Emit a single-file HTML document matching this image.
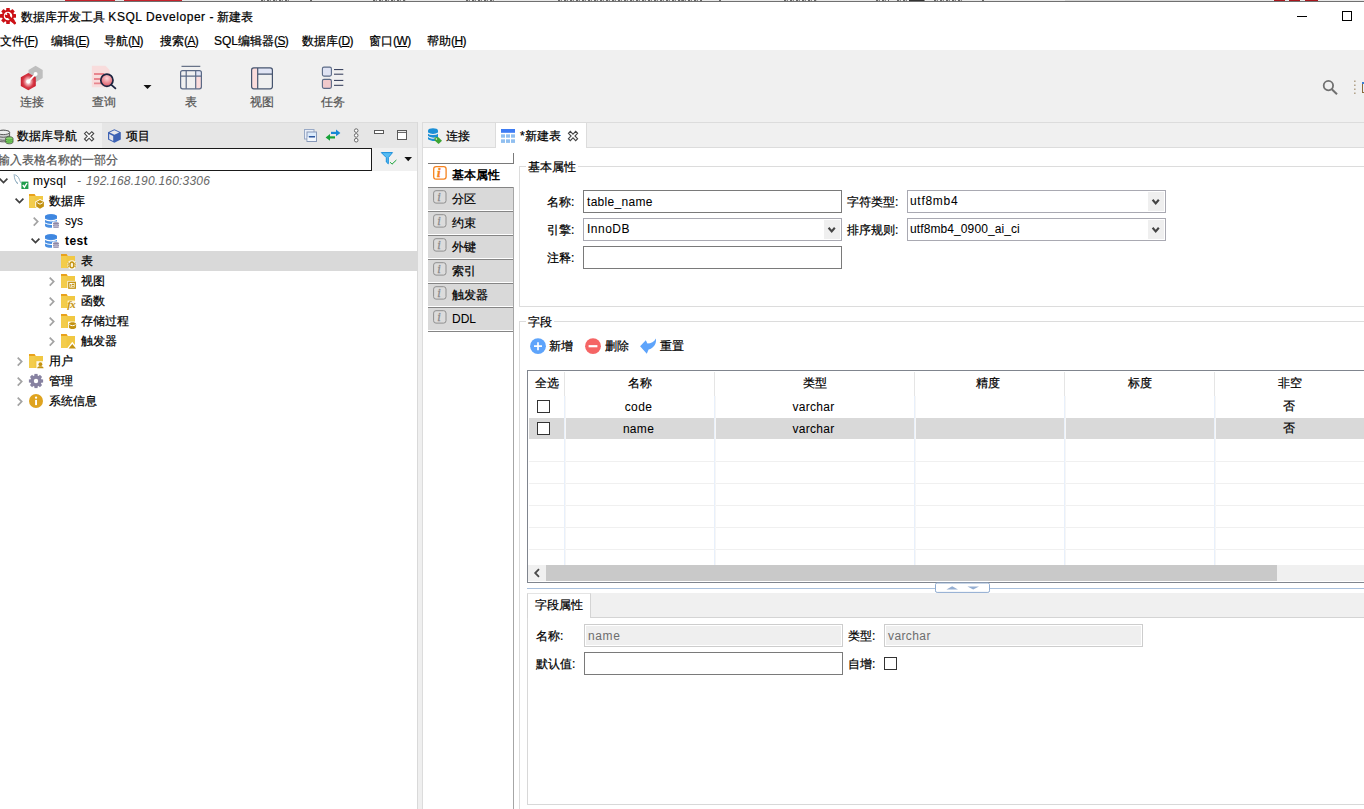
<!DOCTYPE html>
<html lang="zh">
<head>
<meta charset="utf-8">
<title>KSQL Developer</title>
<style>
*{box-sizing:border-box;margin:0;padding:0}
html,body{width:1364px;height:809px;overflow:hidden;background:#fff}
body{font-family:"Liberation Sans",sans-serif;font-size:12px;color:#000;-webkit-text-stroke:0.22px currentColor}
#app{position:relative;width:1364px;height:809px;overflow:hidden;background:#fff}
.a{position:absolute}
.t{position:absolute;white-space:nowrap;line-height:16px;height:16px;font-size:12px}
.g{color:#444}
svg{position:absolute;overflow:visible}
/* top strip */
#strip{left:0;top:0;width:1364px;height:2px;background:#e8e8e8}
#strip i{position:absolute;top:0;height:1px;background:#777}
/* title / menu */
#menu u{text-decoration:underline}
.p{letter-spacing:-0.6px}
/* toolbar */
#toolbar{left:0;top:50px;width:1364px;height:72px;background:#f0f0f0}
.tl{color:#555}
/* left panel */
#lp{left:0;top:122px;width:418px;height:687px;background:#fff;border-right:1px solid #d9d9d9}
#lphead{left:0;top:0;width:417px;height:26px;background:#e6e6e6;border-top:1px solid #dcdcdc}
#lptab{left:0;top:1px;width:102px;height:25px;background:#f0f0f0}
#lpfilter{left:0;top:26px;width:417px;height:23px;background:#f0f0f0}
#lpinput{left:-2px;top:26px;width:374px;height:23px;background:#fff;border:1px solid #1a1a1a}
.row{position:absolute;left:0;width:417px;height:20px}
.row.sel{background:#d9d9d9}
/* right panel */
#sash{left:418px;top:122px;width:4px;height:687px;background:#efefef}
#rp{left:422px;top:122px;width:942px;height:687px;background:#fff;border-left:1px solid #dcdcdc}
#rphead{left:0;top:0;width:941px;height:26px;background:#f0f0f0;border-top:1px solid #dcdcdc;border-bottom:1px solid #dcdcdc}
#rptab{left:72px;top:1px;width:92px;height:25px;background:#fff;border-left:1px solid #dcdcdc;border-right:1px solid #dcdcdc}
.side{position:absolute;left:5px;width:86px;height:22px;background:#d9d9d9;border-top:1px solid #8a8a8a;border-right:1px solid #c8c8c8}
.side.on{background:#fff;border:none}
.inp{position:absolute;height:23px;background:#fff;border:1px solid #7a7a7a}
.cmb{position:absolute;height:23px;background:#fff;border:1px solid #a9a9b2}
.cmb b{position:absolute;right:1px;top:1px;width:16px;height:19px;background:#efefef}
.dis{position:absolute;height:23px;background:#efefef;border:1px solid #cdcdcd;box-shadow:inset 0 0 0 1px #fff}
.vl{position:absolute;width:1px;background:#e6ebf6}
.hl{position:absolute;height:1px;background:#f0f0f0}
.cb{position:absolute;width:13px;height:13px;border:1px solid #333;background:#fff}

.sd{position:absolute;left:428px;width:86px;height:24px;border-top:1px solid #858585;background:#fff}
.sd b{position:absolute;left:0;top:0;width:85px;height:22px;background:#d9d9d9}
.sd .t{left:24px;top:3px}
.lb{position:absolute;white-space:nowrap;line-height:16px;height:16px;font-size:12px}
.gl{position:absolute;background:#dcdcdc}
.th{position:absolute;top:375px;line-height:16px;height:16px;text-align:center;white-space:nowrap}
.td{position:absolute;line-height:16px;height:16px;text-align:center;white-space:nowrap}
.l{-webkit-text-stroke:0.05px currentColor}
</style>
</head>
<body>
<div id="app">

<svg width="0" height="0" style="position:absolute">
 <defs>
  <radialGradient id="gr" cx="50%" cy="50%" r="50%"><stop offset="0" stop-color="#fff"/><stop offset="0.25" stop-color="#f6c9cd"/><stop offset="0.7" stop-color="#d63a47"/><stop offset="1" stop-color="#cb1f2e"/></radialGradient>
  <radialGradient id="gm" cx="50%" cy="35%" r="60%"><stop offset="0" stop-color="#fbd5d8"/><stop offset="1" stop-color="#e0606c"/></radialGradient>
  <symbol id="cd" viewBox="0 0 16 20"><path d="M3.6,7.7 L7.5,11.6 L11.4,7.7" fill="none" stroke="#404040" stroke-width="1.7"/></symbol>
  <symbol id="cr" viewBox="0 0 16 20"><path d="M5.7,6.6 L9.7,10.6 L5.7,14.6" fill="none" stroke="#a3a3a3" stroke-width="1.7"/></symbol>
  <symbol id="fo" viewBox="0 0 16 16"><path d="M0,0 H5.6 L6.8,2 H0 Z" fill="#e9a21c"/><path d="M0,2 H14 V14 H0 Z" fill="#f1c843"/><path d="M0,2 H5.5 V14 H0 Z" fill="#f3cc4c"/></symbol>
  <symbol id="db" viewBox="0 0 16 16">
    <path d="M0,2.6 C0,-0.6 12,-0.6 12,2.6 V11.4 C12,14.6 0,14.6 0,11.4 Z" fill="#4a8fe2"/>
    <ellipse cx="6" cy="2.6" rx="6" ry="2.4" fill="#3f87e0"/>
    <path d="M0,5.2 C2,7.4 10,7.4 12,5.2" fill="none" stroke="#fff" stroke-width="1.1"/>
    <path d="M0,8.8 C2,11 10,11 12,8.8" fill="none" stroke="#fff" stroke-width="1.1"/>
    <rect x="7" y="7.4" width="8" height="8" rx="1.5" fill="#fff"/>
    <path d="M8,9.3 C8,7.9 14,7.9 14,9.3 V12.9 C14,14.3 8,14.3 8,12.9 Z" fill="#8d87a6"/>
    <path d="M8,10.4 C9.5,11.3 12.5,11.3 14,10.4 M8,12.2 C9.5,13.1 12.5,13.1 14,12.2" fill="none" stroke="#e8e6f0" stroke-width="0.7"/>
  </symbol>
 </defs>
</svg>

<!-- sliver of another window peeking at the very top -->
<div id="strip" class="a">
  <i style="left:65px;width:50px;background:#c8222c"></i><i style="left:124px;width:58px;background:#c8222c"></i>
  <i style="left:261px;width:29px;background:repeating-linear-gradient(90deg,#666 0 2px,#ccc 2px 3px,#888 3px 4px,#eee 4px 6px)"></i>
  <i style="left:310px;width:2px;background:repeating-linear-gradient(90deg,#666 0 2px,#ccc 2px 3px,#888 3px 4px,#eee 4px 6px)"></i>
  <i style="left:373px;width:33px;background:repeating-linear-gradient(90deg,#666 0 2px,#ccc 2px 3px,#888 3px 4px,#eee 4px 6px)"></i>
  <i style="left:466px;width:30px;background:repeating-linear-gradient(90deg,#666 0 2px,#ccc 2px 3px,#888 3px 4px,#eee 4px 6px)"></i>
  <i style="left:558px;width:124px;background:repeating-linear-gradient(90deg,#666 0 2px,#ccc 2px 3px,#888 3px 4px,#eee 4px 6px)"></i>
  <i style="left:682px;width:20px;background:repeating-linear-gradient(90deg,#666 0 2px,#ccc 2px 3px,#888 3px 4px,#eee 4px 6px)"></i>
  <i style="left:719px;width:2px;background:repeating-linear-gradient(90deg,#666 0 2px,#ccc 2px 3px,#888 3px 4px,#eee 4px 6px)"></i>
  <i style="left:784px;width:33px;background:repeating-linear-gradient(90deg,#666 0 2px,#ccc 2px 3px,#888 3px 4px,#eee 4px 6px)"></i>
  <i style="left:876px;width:13px;background:repeating-linear-gradient(90deg,#666 0 2px,#ccc 2px 3px,#888 3px 4px,#eee 4px 6px)"></i>
  <i style="left:897px;width:29px;background:repeating-linear-gradient(90deg,#666 0 2px,#ccc 2px 3px,#888 3px 4px,#eee 4px 6px)"></i>
  <i style="left:934px;width:28px;background:repeating-linear-gradient(90deg,#666 0 2px,#ccc 2px 3px,#888 3px 4px,#eee 4px 6px)"></i>
  <i style="left:982px;width:2px;background:repeating-linear-gradient(90deg,#666 0 2px,#ccc 2px 3px,#888 3px 4px,#eee 4px 6px)"></i>
  <i style="left:909px;width:15px;background:#333"></i>
  <i style="left:1065px;width:75px;background:#d4d4d4"></i><i style="left:1150px;width:70px;background:#d8d8d8"></i>
  <i style="left:1274px;width:11px;background:#a8151c"></i><i style="left:1289px;width:11px;background:#a8151c"></i><i style="left:1305px;width:13px;background:#a8151c"></i>
  <i style="left:0;width:1364px;top:1px;background:#707070"></i>
</div>

<!-- TITLE BAR -->
<div id="title" class="a" style="left:0;top:2px;width:1364px;height:29px;background:#fff">
  <svg style="left:0;top:6px" width="17" height="18" viewBox="0 0 17 18"><g fill="#cc1016"><rect x="6.2" y="-0.1" width="3.6" height="4" rx="0.5" transform="rotate(0 8 7.9)"/><rect x="6.2" y="-0.1" width="3.6" height="4" rx="0.5" transform="rotate(45 8 7.9)"/><rect x="6.2" y="-0.1" width="3.6" height="4" rx="0.5" transform="rotate(90 8 7.9)"/><rect x="6.2" y="-0.1" width="3.6" height="4" rx="0.5" transform="rotate(135 8 7.9)"/><rect x="6.2" y="-0.1" width="3.6" height="4" rx="0.5" transform="rotate(180 8 7.9)"/><rect x="6.2" y="-0.1" width="3.6" height="4" rx="0.5" transform="rotate(225 8 7.9)"/><rect x="6.2" y="-0.1" width="3.6" height="4" rx="0.5" transform="rotate(270 8 7.9)"/><rect x="6.2" y="-0.1" width="3.6" height="4" rx="0.5" transform="rotate(315 8 7.9)"/><circle cx="8" cy="7.9" r="6.1"/></g><circle cx="8" cy="7.9" r="4.25" fill="#fff"/><circle cx="7.4" cy="7.4" r="2.55" fill="#cc1016"/><path d="M7.5,7.3 L4.2,6.3 L6.3,3.8 Z" fill="#fff"/><path d="M8.2,8.2 L14.7,15" stroke="#cc1016" stroke-width="2.7" stroke-linecap="round"/></svg>
  <div class="t" style="left:21px;top:7px">数据库开发工具 <span style="letter-spacing:0.55px">KSQL Developer -</span> 新建表</div>
  <div class="a" style="left:1297px;top:14px;width:10px;height:1px;background:#000"></div>
  <div class="a" style="left:1342px;top:9px;width:10px;height:10px;border:1px solid #000"></div>
</div>

<!-- MENU BAR -->
<div id="menu" class="a" style="left:0;top:31px;width:1364px;height:19px;background:#fff">
  <div class="t" style="left:0;top:2px">文件<span class="p">(<u>F</u>)</span></div>
  <div class="t" style="left:51px;top:2px">编辑<span class="p">(<u>E</u>)</span></div>
  <div class="t" style="left:104px;top:2px">导航<span class="p">(<u>N</u>)</span></div>
  <div class="t" style="left:160px;top:2px">搜索<span class="p">(<u>A</u>)</span></div>
  <div class="t" style="left:214px;top:2px">SQL编辑器<span class="p">(<u>S</u>)</span></div>
  <div class="t" style="left:302px;top:2px">数据库<span class="p">(<u>D</u>)</span></div>
  <div class="t" style="left:369px;top:2px">窗口<span class="p">(<u>W</u>)</span></div>
  <div class="t" style="left:427px;top:2px">帮助<span class="p">(<u>H</u>)</span></div>
</div>

<!-- TOOLBAR -->
<div id="toolbar" class="a">

  <svg style="left:0;top:0" width="1364" height="72" viewBox="0 50 1364 72">
   <!-- connect -->
   <polygon points="35.6,65.8 42.7,69.9 42.7,78.1 35.6,82.2 28.5,78.1 28.5,69.9" fill="#bebebe"/>
   <polygon points="28.3,73 35.8,77.3 35.8,85.9 28.3,90.2 20.8,85.9 20.8,77.3" fill="url(#gr)"/>
   <path d="M28.3,81.6 L35.6,74" stroke="#fff" stroke-width="1.8" stroke-linecap="round"/>
   <circle cx="28.3" cy="81.6" r="2" fill="#fff"/><circle cx="35.6" cy="74" r="2" fill="#fff"/>
   <!-- query -->
   <path d="M91.8,65.8 H105.5 L109.6,70 V87.2 H91.8 Z" fill="#f8dcdc"/>
   <path d="M94,74 H104 M94,79 H101 M94,83.4 H101" stroke="#e8858d" stroke-width="1.8"/>
   <circle cx="106.9" cy="80.2" r="6.1" fill="url(#gm)" stroke="#1b2440" stroke-width="1.7"/>
   <path d="M111.4,84.8 L115.4,88.4" stroke="#1b2440" stroke-width="1.8" stroke-linecap="round"/>
   <path d="M143.5,85 H151.5 L147.5,89 Z" fill="#111"/>
   <!-- table -->
   <path d="M181.5,66.3 H200.3" stroke="#46546f" stroke-width="1"/>
   <rect x="195.7" y="70.7" width="5.6" height="5.5" fill="#e1e5f5"/>
   <rect x="195.7" y="76.2" width="5.6" height="12.4" fill="#fbdcdc"/>
   <rect x="180.6" y="70.6" width="20.8" height="18.2" rx="2" fill="none" stroke="#5b6a86" stroke-width="1.2"/>
   <path d="M186.2,70.6 V88.8 M195.7,70.6 V88.8 M180.6,76.2 H201.4" stroke="#5b6a86" stroke-width="1.2"/>
   <!-- view -->
   <rect x="251.6" y="68" width="6" height="20.6" fill="#fbdcdc"/>
   <rect x="257.7" y="68" width="14.4" height="6.2" fill="#e1e5f5"/>
   <rect x="251.6" y="67.9" width="20.8" height="20.9" rx="2.2" fill="none" stroke="#46546f" stroke-width="1.2"/>
   <path d="M257.7,67.9 V88.8 M257.7,74.2 H272.4" stroke="#46546f" stroke-width="1.2"/>
   <!-- task -->
   <rect x="322.4" y="67.1" width="9" height="9" rx="1.6" fill="#dfe3f3" stroke="#5b6a86" stroke-width="1.1"/>
   <rect x="322.4" y="79.4" width="9" height="9" rx="1.6" fill="#f0c9cb" stroke="#5b6a86" stroke-width="1.1"/>
   <path d="M334,69.6 H343.3 M334,74.2 H343.3 M334,80.4 H343.3 M334,85.3 H343.3" stroke="#2a3453" stroke-width="1"/>
   <!-- search -->
   <circle cx="1328.4" cy="85.6" r="4.7" fill="none" stroke="#707070" stroke-width="1.8"/>
   <path d="M1331.8,89.2 L1337,94.2" stroke="#707070" stroke-width="2"/>
   <path d="M1354.8,80.5 V94" stroke="#b3a48c" stroke-width="1.6" stroke-dasharray="1.6 2.4"/>
   <rect x="1362.5" y="82.5" width="4" height="10" fill="#e8f0fa" stroke="#8a6a3a" stroke-width="1"/>
   <rect x="1362" y="82" width="4" height="2" fill="#3b7fd4"/>
  </svg>
  <div class="t tl" style="left:20px;top:44px">连接</div>
  <div class="t tl" style="left:92px;top:44px">查询</div>
  <div class="t tl" style="left:185px;top:44px">表</div>
  <div class="t tl" style="left:250px;top:44px">视图</div>
  <div class="t tl" style="left:321px;top:44px">任务</div>
</div>

<!-- LEFT PANEL -->
<div id="lp" class="a">
  <div id="lphead" class="a"></div>
  <div id="lptab" class="a"></div>
  <div class="t" style="left:17px;top:6px">数据库导航</div>
  <div class="t" style="left:126px;top:6px">项目</div>
  <div id="lpfilter" class="a"></div>
  <div id="lpinput" class="a"></div>
  <div class="t g" style="left:-2px;top:30px;color:#555">输入表格名称的一部分</div>

  <svg style="left:0;top:0" width="417" height="50" viewBox="0 122 417 50">
   <!-- db navigator icon -->
   <path d="M-3,132.4 C-3,129.6 9.6,129.6 9.6,132.4 V139.6 C9.6,142.6 -3,142.6 -3,139.6 Z" fill="#cfcfcf" stroke="#5e5e5e" stroke-width="1"/>
   <ellipse cx="3.3" cy="132.4" rx="6.3" ry="2.2" fill="#ececec" stroke="#5e5e5e" stroke-width="1"/>
   <path d="M-3,135.8 C0,137.8 6.6,137.8 9.6,135.8 M-3,138.6 C-1,140 2,140.4 5,140.2" fill="none" stroke="#5e5e5e" stroke-width="1"/>
   <path d="M5.6,138.4 C5.6,136.2 13,136.2 13,138.4 V142 C13,144.4 5.6,144.4 5.6,142 Z" fill="#86d46a" stroke="#4e5a4a" stroke-width="0.9"/>
   <path d="M5.8,139.2 C7.4,140.4 11.2,140.4 12.8,139.2 M5.8,141.2 C7.4,142.4 11.2,142.4 12.8,141.2" fill="none" stroke="#3f9a32" stroke-width="0.9"/>
   <!-- close x -->
   <path d="M84.5,133.6 L86.4,131.7 L89.1,134.4 L91.8,131.7 L93.7,133.6 L91.0,136.3 L93.7,139.0 L91.8,140.9 L89.1,138.2 L86.4,140.9 L84.5,139.0 L87.2,136.3 Z" fill="#fff" stroke="#444" stroke-width="1.1" stroke-linejoin="miter"/>
   <!-- project cube -->
   <path d="M114.4,129.2 L120.8,132.2 V139.6 L114.4,142.8 L108,139.6 V132.2 Z" fill="#3d62b4"/>
   <path d="M114.4,130.2 L119.2,132.5 L114.4,134.8 L109.6,132.5 Z" fill="#e9e9ec"/>
   <path d="M109.2,134 L113.2,136 V141 L109.2,139 Z" fill="#e6e6ea"/>
   <!-- collapse all -->
   <rect x="304.5" y="129.5" width="9.5" height="9.5" fill="#e9eef7" stroke="#98a9c6" stroke-width="1"/>
   <rect x="307" y="132" width="9.5" height="9.5" fill="#dcebfb" stroke="#8798b8" stroke-width="1"/><rect x="307.6" y="137" width="8.3" height="4" fill="#f4f8fd"/>
   <path d="M308.8,136.8 H315" stroke="#0d3d8e" stroke-width="1.3"/>
   <!-- link arrows -->
   <path d="M331,132.9 H337.4" stroke="#1588d6" stroke-width="2.2"/><path d="M336,129.6 L340.4,132.9 L336,136.2 Z" fill="#1588d6"/>
   <path d="M328.6,137.4 H335" stroke="#16a238" stroke-width="2.2"/><path d="M330,134.1 L325.6,137.4 L330,140.7 Z" fill="#16a238"/>
   <!-- view menu dots -->
   <circle cx="356.2" cy="130.6" r="1.8" fill="#fff" stroke="#5a5a5a" stroke-width="0.9"/>
   <circle cx="356.2" cy="135.4" r="1.8" fill="#fff" stroke="#5a5a5a" stroke-width="0.9"/>
   <circle cx="356.2" cy="140.2" r="1.8" fill="#fff" stroke="#5a5a5a" stroke-width="0.9"/>
   <!-- min / max -->
   <rect x="374.5" y="130.5" width="9" height="3" fill="#fff" stroke="#5a5a5a" stroke-width="1"/>
   <rect x="397.5" y="130.5" width="9" height="9" fill="#fff" stroke="#5a5a5a" stroke-width="1"/>
   <path d="M397.5,132.4 H406.5" stroke="#5a5a5a" stroke-width="1"/>
   <!-- filter -->
   <path d="M381.3,152.6 H392.5 L388.3,157.6 V163.8 L386.3,162 V157.6 Z" fill="#56bcf2" stroke="#1a8fdc" stroke-width="1" stroke-linejoin="round"/>
   <path d="M390.2,162.2 L392,164.2 L396.4,160" fill="none" stroke="#17a338" stroke-width="1"/>
   <path d="M404.4,157 H412 L408.2,161.2 Z" fill="#111"/>
  </svg>
  <!-- tree -->
  <div class="row" style="top:49px"><svg style="left:-4px;top:0" width="16" height="20"><use href="#cd"/></svg><svg style="left:13px;top:3px" width="16" height="16" viewBox="0 0 16 16"><path d="M0.6,0.8 C3,0.6 5.4,2.4 6.4,5.4 C7,7.2 7.2,8.4 8.4,9.4 M1.2,1.4 C1.4,4.4 2.2,7.2 4.6,9.8 L3.6,7.6" fill="none" stroke="#8fadc0" stroke-width="1"/><rect x="8.4" y="7.6" width="7" height="7.4" fill="#1f9d4c"/><path d="M9.8,11 L11.4,13.2 L14,9" fill="none" stroke="#fff" stroke-width="1.4"/></svg><div class="t l" style="left:33px;top:2px;letter-spacing:0.4px">mysql</div><div class="t" style="left:77px;top:2px;font-style:italic;color:#686868;letter-spacing:0.2px;word-spacing:1.2px;-webkit-text-stroke:0">- 192.168.190.160:3306</div></div>
  <div class="row" style="top:69px"><svg style="left:12px;top:0" width="16" height="20"><use href="#cd"/></svg><svg style="left:29px;top:3px" width="16" height="16" viewBox="0 0 16 16"><use href="#fo" width="16" height="16"/><path d="M11,4.9 L15.8,7.6 V13 L11,15.7 L6.3,13 V7.6 Z" fill="#fff"/><path d="M11,5.9 L14.9,8.1 V12.5 L11,14.7 L7.2,12.5 V8.1 Z" fill="#c39211"/><path d="M8.3,8.7 L11,10.2 L13.8,8.7" fill="none" stroke="#fff" stroke-width="1"/></svg><div class="t" style="left:49px;top:2px;">数据库</div></div>
  <div class="row" style="top:89px"><svg style="left:28px;top:0" width="16" height="20"><use href="#cr"/></svg><svg style="left:45px;top:3px" width="16" height="16"><use href="#db"/></svg><div class="t l" style="left:65px;top:2px;">sys</div></div>
  <div class="row" style="top:109px"><svg style="left:28px;top:0" width="16" height="20"><use href="#cd"/></svg><svg style="left:45px;top:3px" width="16" height="16"><use href="#db"/></svg><div class="t" style="left:65px;top:2px;font-weight:bold;-webkit-text-stroke:0;letter-spacing:0.4px">test</div></div>
  <div class="row sel" style="top:129px"><svg style="left:61px;top:3px" width="16" height="16" viewBox="0 0 16 16"><use href="#fo" width="16" height="16"/><circle cx="10.9" cy="10.9" r="4.7" fill="#fff" opacity="0.8"/><ellipse cx="10.9" cy="10.9" rx="1.9" ry="2.9" fill="none" stroke="#c39211" stroke-width="1.3"/><path d="M6.9,8.8 L8.5,9.5 M6.9,13 L8.5,12.3 M14.9,8.8 L13.3,9.5 M14.9,13 L13.3,12.3 M6.6,10.9 H8.3 M13.5,10.9 H15.2" stroke="#c39211" stroke-width="1"/></svg><div class="t" style="left:81px;top:2px;">表</div></div>
  <div class="row" style="top:149px"><svg style="left:44px;top:0" width="16" height="20"><use href="#cr"/></svg><svg style="left:61px;top:3px" width="16" height="16" viewBox="0 0 16 16"><use href="#fo" width="16" height="16"/><rect x="6.4" y="6.9" width="9.4" height="8.8" fill="#fff"/><rect x="7.8" y="8.3" width="6.5" height="5.9" fill="#fff" stroke="#c39211" stroke-width="1.3"/><path d="M9.8,9.9 V12.7 M11,10.4 H13.1 M11,12.2 H13.1" stroke="#c39211" stroke-width="1.1"/></svg><div class="t" style="left:81px;top:2px;">视图</div></div>
  <div class="row" style="top:169px"><svg style="left:44px;top:0" width="16" height="20"><use href="#cr"/></svg><svg style="left:61px;top:3px" width="16" height="16" viewBox="0 0 16 16"><use href="#fo" width="16" height="16"/><path d="M6.6,6.6 H16 V16 H6.6 Z" fill="#fff" opacity="0.85"/><text x="6.3" y="13.6" font-family="Liberation Serif,serif" font-style="italic" font-weight="bold" font-size="11" fill="#c39211" letter-spacing="-0.6">fx</text></svg><div class="t" style="left:81px;top:2px;">函数</div></div>
  <div class="row" style="top:189px"><svg style="left:44px;top:0" width="16" height="20"><use href="#cr"/></svg><svg style="left:61px;top:3px" width="16" height="16" viewBox="0 0 16 16"><use href="#fo" width="16" height="16"/><path d="M7,7.6 H15.8 V15.8 H7 Z" fill="#fff"/><path d="M7.9,10.2 C7.9,7.6 15.1,7.6 15.1,10.2 V13.2 C15.1,15.6 7.9,15.6 7.9,13.2 Z" fill="#c39211"/><path d="M8.4,10.6 C10,12 13,12 14.6,10.6" fill="none" stroke="#fff" stroke-width="1"/></svg><div class="t" style="left:81px;top:2px;">存储过程</div></div>
  <div class="row" style="top:209px"><svg style="left:44px;top:0" width="16" height="20"><use href="#cr"/></svg><svg style="left:61px;top:3px" width="16" height="16" viewBox="0 0 16 16"><use href="#fo" width="16" height="16"/><path d="M11.3,7.8 L16.8,14.8 H5.8 Z" fill="#fff"/><path d="M11.3,10 L15,14.5 H7.6 Z" fill="#c39211"/></svg><div class="t" style="left:81px;top:2px;">触发器</div></div>
  <div class="row" style="top:229px"><svg style="left:12px;top:0" width="16" height="20"><use href="#cr"/></svg><svg style="left:29px;top:3px" width="16" height="16" viewBox="0 0 16 16"><use href="#fo" width="16" height="16"/><path d="M7.4,7.2 H15 V15 H7.4 Z" fill="#fff" opacity="0.9"/><circle cx="11.4" cy="10.2" r="1.9" fill="#c39211"/><path d="M8.2,14.2 C8.2,11.6 14.6,11.6 14.6,14.2 Z" fill="#c39211"/></svg><div class="t" style="left:49px;top:2px;">用户</div></div>
  <div class="row" style="top:249px"><svg style="left:12px;top:0" width="16" height="20"><use href="#cr"/></svg><svg style="left:29px;top:3px" width="16" height="16" viewBox="0 0 16 16"><g fill="#8782a1"><circle cx="7" cy="7" r="5.7"/><rect x="5.4" y="-0.1" width="3.2" height="3" transform="rotate(0 7 7)"/><rect x="5.4" y="-0.1" width="3.2" height="3" transform="rotate(45 7 7)"/><rect x="5.4" y="-0.1" width="3.2" height="3" transform="rotate(90 7 7)"/><rect x="5.4" y="-0.1" width="3.2" height="3" transform="rotate(135 7 7)"/><rect x="5.4" y="-0.1" width="3.2" height="3" transform="rotate(180 7 7)"/><rect x="5.4" y="-0.1" width="3.2" height="3" transform="rotate(225 7 7)"/><rect x="5.4" y="-0.1" width="3.2" height="3" transform="rotate(270 7 7)"/><rect x="5.4" y="-0.1" width="3.2" height="3" transform="rotate(315 7 7)"/></g><circle cx="7" cy="7" r="2.2" fill="#fff"/></svg><div class="t" style="left:49px;top:2px;">管理</div></div>
  <div class="row" style="top:269px"><svg style="left:12px;top:0" width="16" height="20"><use href="#cr"/></svg><svg style="left:29px;top:3px" width="16" height="16" viewBox="0 0 16 16"><circle cx="7" cy="7" r="7" fill="#dfa31f"/><rect x="6.1" y="5.9" width="1.9" height="5.2" fill="#fff"/><circle cx="7.05" cy="3.7" r="1.15" fill="#fff"/></svg><div class="t" style="left:49px;top:2px;">系统信息</div></div>
</div>

<div id="sash" class="a"></div>

<!-- RIGHT PANEL -->
<div id="rp" class="a">
  <div id="rphead" class="a"></div>
  <div id="rptab" class="a"></div>
</div>

<!-- RIGHT PANEL CONTENT (page coordinates) -->
<div id="rc" class="a" style="left:0;top:0;width:1364px;height:809px">
  <!-- editor tabs -->
  <svg style="left:0;top:0" width="1364" height="150" viewBox="0 0 1364 150">
   <!-- connection icon -->
   <path d="M428,130.4 C428,127.6 438,127.6 438,130.4 V139.2 C438,141.4 432,141.8 428,139.2 Z" fill="#1b8fd6"/>
   <path d="M428,133 C430,135 436,135 438,133 M428,136.4 C430,138.4 434,138.6 436,137.6" fill="none" stroke="#f0f0f0" stroke-width="1.1"/>
   <path d="M434.6,137.2 H438.4 L442,140.8 L438.6,144 L434.6,140.4 Z" fill="#3fa535"/><circle cx="436.4" cy="139" r="0.8" fill="#f0f0f0"/>
   <!-- table icon -->
   <rect x="501" y="129" width="14" height="3.8" fill="#3d7cf4"/>
   <g fill="#90bff0"><rect x="501" y="134.3" width="4" height="3.4"/><rect x="506" y="134.3" width="4" height="3.4"/><rect x="511" y="134.3" width="4" height="3.4"/>
   <rect x="501" y="139.3" width="4" height="3.6"/><rect x="506" y="139.3" width="4" height="3.6"/><rect x="511" y="139.3" width="4" height="3.6"/></g>
   <!-- close x -->
   <path d="M568.4,133.3 L570.3,131.4 L573.0,134.1 L575.7,131.4 L577.6,133.3 L574.9,136.0 L577.6,138.7 L575.7,140.6 L573.0,137.9 L570.3,140.6 L568.4,138.7 L571.1,136.0 Z" fill="#fff" stroke="#444" stroke-width="1.1" stroke-linejoin="miter"/>
  </svg>
  <div class="t" style="left:446px;top:128px">连接</div>
  <div class="t" style="left:520px;top:128px">*新建表</div>

  <!-- side nav -->
  <div class="a" style="left:428px;top:163px;width:86px;height:1px;background:#7a7a7a"></div>
  <div class="a" style="left:513px;top:153px;width:1px;height:11px;background:#7a7a7a"></div>
  <svg style="left:433px;top:166px" width="14" height="14" viewBox="0 0 14 14"><rect x="0.7" y="0.7" width="12.4" height="12.4" rx="2.4" fill="#fff" stroke="#f5821f" stroke-width="1.3"/><text x="4.1" y="11.3" font-family="Liberation Serif,serif" font-style="italic" font-weight="bold" font-size="12.5" fill="#f5821f" stroke="#f5821f" stroke-width="0.45">i</text></svg>
  <div class="t" style="left:452px;top:167px;font-weight:bold;-webkit-text-stroke:0">基本属性</div>
  <div class="sd" style="top:187px"><b></b><svg style="left:5px;top:2px" width="14" height="14" viewBox="0 0 14 14"><rect x="0.6" y="0.7" width="12.4" height="12.4" rx="2.4" fill="#dcdcdc" stroke="#8f8f8f" stroke-width="1"/><text x="4.3" y="11.2" font-family="Liberation Serif,serif" font-style="italic" font-size="12.5" fill="#8a8a8a" stroke="#8a8a8a" stroke-width="0.3">i</text></svg><div class="t">分区</div></div>
  <div class="sd" style="top:211px"><b></b><svg style="left:5px;top:2px" width="14" height="14" viewBox="0 0 14 14"><rect x="0.6" y="0.7" width="12.4" height="12.4" rx="2.4" fill="#dcdcdc" stroke="#8f8f8f" stroke-width="1"/><text x="4.3" y="11.2" font-family="Liberation Serif,serif" font-style="italic" font-size="12.5" fill="#8a8a8a" stroke="#8a8a8a" stroke-width="0.3">i</text></svg><div class="t">约束</div></div>
  <div class="sd" style="top:235px"><b></b><svg style="left:5px;top:2px" width="14" height="14" viewBox="0 0 14 14"><rect x="0.6" y="0.7" width="12.4" height="12.4" rx="2.4" fill="#dcdcdc" stroke="#8f8f8f" stroke-width="1"/><text x="4.3" y="11.2" font-family="Liberation Serif,serif" font-style="italic" font-size="12.5" fill="#8a8a8a" stroke="#8a8a8a" stroke-width="0.3">i</text></svg><div class="t">外键</div></div>
  <div class="sd" style="top:259px"><b></b><svg style="left:5px;top:2px" width="14" height="14" viewBox="0 0 14 14"><rect x="0.6" y="0.7" width="12.4" height="12.4" rx="2.4" fill="#dcdcdc" stroke="#8f8f8f" stroke-width="1"/><text x="4.3" y="11.2" font-family="Liberation Serif,serif" font-style="italic" font-size="12.5" fill="#8a8a8a" stroke="#8a8a8a" stroke-width="0.3">i</text></svg><div class="t">索引</div></div>
  <div class="sd" style="top:283px"><b></b><svg style="left:5px;top:2px" width="14" height="14" viewBox="0 0 14 14"><rect x="0.6" y="0.7" width="12.4" height="12.4" rx="2.4" fill="#dcdcdc" stroke="#8f8f8f" stroke-width="1"/><text x="4.3" y="11.2" font-family="Liberation Serif,serif" font-style="italic" font-size="12.5" fill="#8a8a8a" stroke="#8a8a8a" stroke-width="0.3">i</text></svg><div class="t">触发器</div></div>
  <div class="sd" style="top:307px"><b></b><svg style="left:5px;top:2px" width="14" height="14" viewBox="0 0 14 14"><rect x="0.6" y="0.7" width="12.4" height="12.4" rx="2.4" fill="#dcdcdc" stroke="#8f8f8f" stroke-width="1"/><text x="4.3" y="11.2" font-family="Liberation Serif,serif" font-style="italic" font-size="12.5" fill="#8a8a8a" stroke="#8a8a8a" stroke-width="0.3">i</text></svg><div class="t l">DDL</div></div>
  <div class="a" style="left:428px;top:331px;width:86px;height:1px;background:#858585"></div>
  <div class="a" style="left:513px;top:187px;width:1px;height:622px;background:#a6a6a6"></div>

  <!-- group 1 -->
  <div class="gl" style="left:519px;top:166px;width:845px;height:1px"></div>
  <div class="gl" style="left:519px;top:166px;width:1px;height:141px"></div>
  <div class="gl" style="left:519px;top:306px;width:845px;height:1px"></div>
  <div class="lb" style="left:526px;top:159px;background:#fff;padding:0 2px">基本属性</div>
  <div class="lb" style="left:547px;top:194px">名称:</div>
  <div class="inp" style="left:583px;top:190px;width:259px"></div>
  <div class="lb l" style="left:587px;top:194px;letter-spacing:0.3px">table_name</div>
  <div class="lb" style="left:547px;top:222px">引擎:</div>
  <div class="cmb" style="left:583px;top:218px;width:259px"><b></b></div>
  <div class="lb l" style="left:587px;top:221px;letter-spacing:0.5px">InnoDB</div>
  <div class="lb" style="left:547px;top:250px">注释:</div>
  <div class="inp" style="left:583px;top:246px;width:259px"></div>
  <div class="lb" style="left:847px;top:194px">字符类型:</div>
  <div class="cmb" style="left:907px;top:190px;width:259px"><b></b></div>
  <div class="lb l" style="left:910px;top:193px;letter-spacing:0.7px">utf8mb4</div>
  <div class="lb" style="left:847px;top:222px">排序规则:</div>
  <div class="cmb" style="left:907px;top:218px;width:259px"><b></b></div>
  <div class="lb l" style="left:910px;top:221px;letter-spacing:0.1px">utf8mb4_0900_ai_ci</div>
  <svg style="left:0;top:0" width="1364" height="300" viewBox="0 0 1364 300">
   <g fill="none" stroke="#444" stroke-width="2.1"><path d="M828.6,227.8 L831.7,231.4 L834.8,227.8"/><path d="M1152.6,199.8 L1155.7,203.4 L1158.8,199.8"/><path d="M1152.6,227.8 L1155.7,231.4 L1158.8,227.8"/></g>
  </svg>

  <!-- group 2 -->
  <div class="gl" style="left:519px;top:321px;width:845px;height:1px"></div>
  <div class="gl" style="left:519px;top:321px;width:1px;height:488px"></div>
  <div class="lb" style="left:526px;top:314px;background:#fff;padding:0 2px">字段</div>
  <svg style="left:0;top:330px" width="700" height="34" viewBox="0 330 700 34">
   <circle cx="538" cy="346.2" r="7.9" fill="#5ea4fb"/><path d="M534,346.2 H542 M538,342.2 V350.2" stroke="#fff" stroke-width="1.7"/>
   <circle cx="593" cy="346.2" r="7.9" fill="#f56565"/><path d="M588.6,346.2 H597.4" stroke="#fff" stroke-width="2.2"/>
   <path d="M655.9,338.4 C656.8,343.6 653.6,348.2 648.6,349.4 L646.8,353.8 L640.1,346.3 L645.8,340.2 L647.4,343.4 C651,343.4 654.2,341.6 655.9,338.4 Z" fill="#5ea4fb"/>
  </svg>
  <div class="lb" style="left:549px;top:338px">新增</div>
  <div class="lb" style="left:605px;top:338px">删除</div>
  <div class="lb" style="left:660px;top:338px">重置</div>

  <!-- fields table -->
  <div class="a" style="left:527px;top:370px;width:840px;height:213px;border:1px solid #80858e;background:#fff"></div>
  <div class="a" style="left:529px;top:418px;width:835px;height:21px;background:#d9d9d9"></div>
  <div class="hl" style="left:529px;top:461px;width:835px"></div>
  <div class="hl" style="left:529px;top:483px;width:835px"></div>
  <div class="hl" style="left:529px;top:505px;width:835px"></div>
  <div class="hl" style="left:529px;top:527px;width:835px"></div>
  <div class="hl" style="left:529px;top:549px;width:835px"></div>
  <div class="vl" style="left:564px;top:372px;height:24px;background:#e5e5e5"></div><div class="vl" style="left:564px;top:396px;height:169px;background:#e8f0fb"></div><div class="vl" style="left:565px;top:396px;height:169px;background:#f6f6f6"></div>
  <div class="vl" style="left:714px;top:372px;height:24px;background:#e5e5e5"></div><div class="vl" style="left:714px;top:396px;height:169px;background:#e8f0fb"></div><div class="vl" style="left:715px;top:396px;height:169px;background:#f6f6f6"></div>
  <div class="vl" style="left:914px;top:372px;height:24px;background:#e5e5e5"></div><div class="vl" style="left:914px;top:396px;height:169px;background:#e8f0fb"></div><div class="vl" style="left:915px;top:396px;height:169px;background:#f6f6f6"></div>
  <div class="vl" style="left:1064px;top:372px;height:24px;background:#e5e5e5"></div><div class="vl" style="left:1064px;top:396px;height:169px;background:#e8f0fb"></div><div class="vl" style="left:1065px;top:396px;height:169px;background:#f6f6f6"></div>
  <div class="vl" style="left:1214px;top:372px;height:24px;background:#e5e5e5"></div><div class="vl" style="left:1214px;top:396px;height:169px;background:#e8f0fb"></div><div class="vl" style="left:1215px;top:396px;height:169px;background:#f6f6f6"></div>
  <div class="th" style="left:528px;width:37px">全选</div>
  <div class="th" style="left:565px;width:149px">名称</div>
  <div class="th" style="left:715px;width:199px">类型</div>
  <div class="th" style="left:913px;width:149px">精度</div>
  <div class="th" style="left:1065px;width:149px">标度</div>
  <div class="th" style="left:1215px;width:149px">非空</div>
  <div class="cb" style="left:537px;top:400px"></div>
  <div class="td l" style="left:566px;width:145px;top:399px;letter-spacing:0.4px">code</div>
  <div class="td l" style="left:716px;width:195px;top:399px;letter-spacing:0.3px">varchar</div>
  <div class="td" style="left:1215px;width:147px;top:398px">否</div>
  <div class="cb" style="left:537px;top:422px"></div>
  <div class="td l" style="left:566px;width:145px;top:421px;letter-spacing:0.3px">name</div>
  <div class="td l" style="left:716px;width:195px;top:421px;letter-spacing:0.3px">varchar</div>
  <div class="td" style="left:1215px;width:147px;top:420px">否</div>
  <!-- h scrollbar -->
  <div class="a" style="left:528px;top:565px;width:836px;height:16px;background:#f0f0f0"></div>
  <div class="a" style="left:546px;top:565px;width:731px;height:16px;background:#c9c9c9"></div>
  <svg style="left:530px;top:565px" width="14" height="16" viewBox="0 0 14 16"><path d="M9,4.2 L5.2,8 L9,11.8" fill="none" stroke="#4a4a4a" stroke-width="1.8"/></svg>

  <!-- sash -->
  <div class="a" style="left:527px;top:588px;width:837px;height:1px;background:#a9c0dc"></div>
  <svg style="left:934px;top:582px" width="58" height="12" viewBox="0 0 58 12"><rect x="1.5" y="1" width="54" height="9.4" rx="1.6" fill="#fff" stroke="#8fabd0" stroke-width="1"/><path d="M12.4,7.4 H24 L18.2,4.2 Z M33.4,4.4 H45 L39.2,7.6 Z" fill="#94aed2"/></svg>

  <!-- field-properties tab folder -->
  <div class="a" style="left:527px;top:593px;width:837px;height:25px;background:#f0f0f0;border-bottom:1px solid #d4d4d4"></div>
  <div class="a" style="left:527px;top:593px;width:64px;height:25px;background:#fff;border-left:1px solid #d4d4d4;border-right:1px solid #d4d4d4;border-top:1px solid #e4e4e4"></div>
  <div class="a" style="left:527px;top:618px;width:1px;height:187px;background:#d8d8d8"></div>
  <div class="a" style="left:527px;top:804px;width:837px;height:1px;background:#d8d8d8"></div>
  <div class="lb" style="left:535px;top:597px">字段属性</div>
  <div class="lb" style="left:536px;top:628px">名称:</div>
  <div class="dis" style="left:584px;top:624px;width:259px"></div>
  <div class="lb l" style="left:588px;top:628px;color:#6d6d6d;-webkit-text-stroke:0;letter-spacing:0.6px">name</div>
  <div class="lb" style="left:848px;top:628px">类型:</div>
  <div class="dis" style="left:884px;top:624px;width:259px"></div>
  <div class="lb l" style="left:888px;top:628px;color:#6d6d6d;-webkit-text-stroke:0;letter-spacing:0.4px">varchar</div>
  <div class="lb" style="left:536px;top:656px">默认值:</div>
  <div class="inp" style="left:584px;top:652px;width:259px"></div>
  <div class="lb" style="left:848px;top:656px">自增:</div>
  <div class="cb" style="left:884px;top:657px"></div>
</div>

</div>
</body>
</html>
